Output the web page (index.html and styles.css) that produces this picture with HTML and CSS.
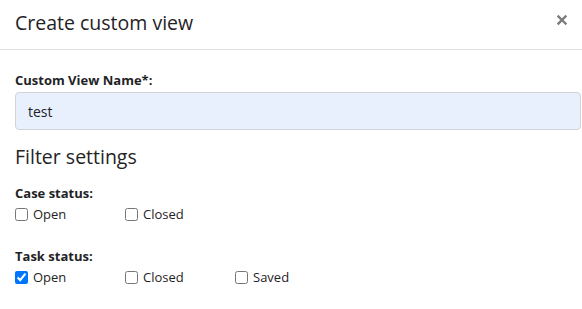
FILE: index.html
```html
<!DOCTYPE html>
<html>
<head>
<meta charset="utf-8">
<link rel="stylesheet" href="styles.css">
</head>
<body>
<div class="modal">
  <div class="header">
    <h4 class="title">Create custom view</h4>
    <button class="close" aria-label="Close">
      <svg width="12" height="12" viewBox="0 0 12 12"><path d="M2.5 2.5L9.5 9.5M9.5 2.5L2.5 9.5" stroke="#7b7b7b" stroke-width="2.4" stroke-linecap="square"/></svg>
    </button>
  </div>
  <div class="body">
    <label class="field-label" for="name">Custom View Name*:</label>
    <input id="name" class="input" type="text" value="test">
    <h4 class="section">Filter settings</h4>
    <div class="group">
      <div class="group-label">Case status:</div>
      <div class="options">
        <label class="opt"><input type="checkbox"> Open</label>
        <label class="opt"><input type="checkbox"> Closed</label>
      </div>
    </div>
    <div class="group">
      <div class="group-label">Task status:</div>
      <div class="options">
        <label class="opt"><input type="checkbox" checked> Open</label>
        <label class="opt"><input type="checkbox"> Closed</label>
        <label class="opt"><input type="checkbox"> Saved</label>
      </div>
    </div>
  </div>
</div>
</body>
</html>
```
FILE: styles.css
```css
html, body {
  margin: 0;
  padding: 0;
  background: #fff;
}
body {
  font-family: "Open Sans", "Noto Sans", sans-serif;
  color: #1f2326;
}
.header {
  height: 50px;
  box-sizing: border-box;
  border-bottom: 1px solid #e3e3e3;
  padding: 0 14px 0 15px;
  display: flex;
  align-items: center;
  justify-content: space-between;
}
.title {
  margin: 0;
  font-size: 19.5px;
  font-weight: 400;
  line-height: 24px;
  color: #1f2326;
  position: relative;
  top: -2px;
}
.close {
  border: 0;
  background: none;
  padding: 0;
  width: 12px;
  height: 12px;
  display: flex;
  position: relative;
  top: -5px;
}
.body {
  padding: 21px 1px 0 15px;
}
.field-label {
  display: block;
  font-size: 13px;
  font-weight: 700;
  line-height: 18px;
}
.input {
  display: block;
  box-sizing: border-box;
  width: 100%;
  height: 38px;
  margin-top: 3px;
  padding: 0 12px;
  font-family: inherit;
  font-size: 14px;
  color: #1f2326;
  background: #e8f0fe;
  border: 1px solid #d0d4d8;
  border-radius: 4px;
}
.section {
  margin: 15px 0 0;
  font-size: 19.5px;
  font-weight: 400;
  line-height: 24px;
}
.group {
  margin-top: 15px;
  margin-bottom: 23px;
}
.group + .group {
  margin-top: 0;
}
.group-label {
  font-size: 13px;
  font-weight: 700;
  line-height: 18px;
}
.options {
  display: flex;
  margin-top: 2px;
}
.opt {
  width: 110px;
  display: flex;
  align-items: center;
  font-size: 13px;
  line-height: 20px;
}
.opt input {
  margin: 0 5px 0 0;
  width: 13px;
  height: 13px;
}
```
